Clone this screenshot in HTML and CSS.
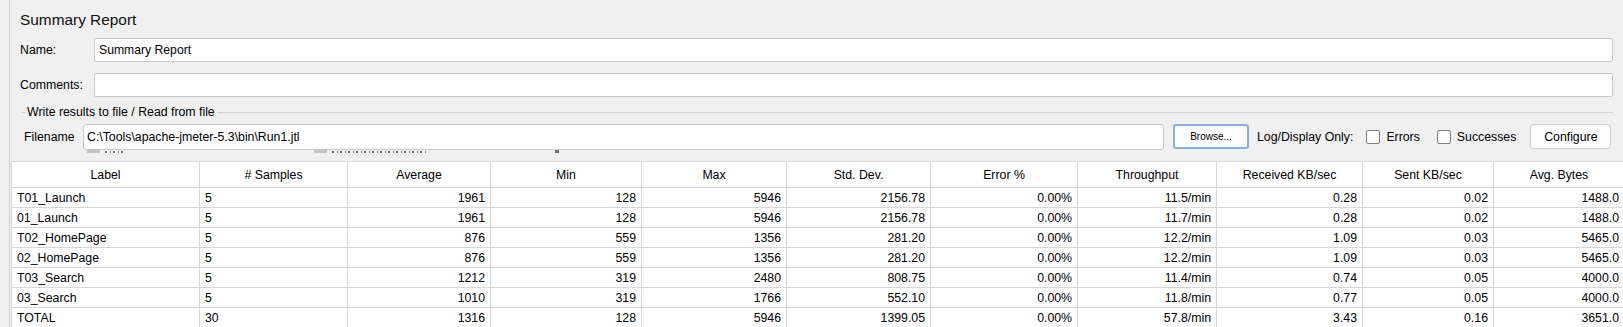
FILE: index.html
```html
<!DOCTYPE html>
<html>
<head>
<meta charset="utf-8">
<link rel="stylesheet" href="styles.css">
</head>
<body>
<div class="panel">
  <div class="title">Summary Report</div>
  <div class="form-row name-row">
    <div class="lbl">Name:</div>
    <div class="field">Summary Report</div>
  </div>
  <div class="form-row comments-row">
    <div class="lbl">Comments:</div>
    <div class="field"></div>
  </div>
  <div class="group">
    <div class="legend"><span>Write results to file / Read from file</span></div>
    <div class="file-row">
      <div class="file-lbl">Filename</div>
      <div class="file-field">C:\Tools\apache-jmeter-5.3\bin\Run1.jtl</div>
      <div class="btn browse">Browse...</div>
      <div class="txt log">Log/Display Only:</div>
      <div class="chk chk-err"></div>
      <div class="txt">Errors</div>
      <div class="chk chk-suc"></div>
      <div class="txt">Successes</div>
      <div class="btn configure">Configure</div>
    </div>
  </div>
  <div class="ghost">
    <span class="ghost-box g1"></span><span class="ghost-ink w1"></span>
    <span class="ghost-box g2"></span><span class="ghost-ink w2"></span>
    <span class="ghost-mark"></span>
  </div>
  <table class="grid">
    <colgroup>
      <col class="c-label"><col class="c-samples"><col class="c-avg"><col class="c-min"><col class="c-max"><col class="c-std"><col class="c-err"><col class="c-thr"><col class="c-recv"><col class="c-sent"><col class="c-bytes">
    </colgroup>
    <thead>
      <tr><th>Label</th><th># Samples</th><th>Average</th><th>Min</th><th>Max</th><th>Std. Dev.</th><th>Error %</th><th>Throughput</th><th>Received KB/sec</th><th>Sent KB/sec</th><th>Avg. Bytes</th></tr>
    </thead>
    <tbody>
      <tr><td class="l">T01_Launch</td><td class="l">5</td><td>1961</td><td>128</td><td>5946</td><td>2156.78</td><td>0.00%</td><td>11.5/min</td><td>0.28</td><td>0.02</td><td>1488.0</td></tr>
      <tr><td class="l">01_Launch</td><td class="l">5</td><td>1961</td><td>128</td><td>5946</td><td>2156.78</td><td>0.00%</td><td>11.7/min</td><td>0.28</td><td>0.02</td><td>1488.0</td></tr>
      <tr><td class="l">T02_HomePage</td><td class="l">5</td><td>876</td><td>559</td><td>1356</td><td>281.20</td><td>0.00%</td><td>12.2/min</td><td>1.09</td><td>0.03</td><td>5465.0</td></tr>
      <tr><td class="l">02_HomePage</td><td class="l">5</td><td>876</td><td>559</td><td>1356</td><td>281.20</td><td>0.00%</td><td>12.2/min</td><td>1.09</td><td>0.03</td><td>5465.0</td></tr>
      <tr><td class="l">T03_Search</td><td class="l">5</td><td>1212</td><td>319</td><td>2480</td><td>808.75</td><td>0.00%</td><td>11.4/min</td><td>0.74</td><td>0.05</td><td>4000.0</td></tr>
      <tr><td class="l">03_Search</td><td class="l">5</td><td>1010</td><td>319</td><td>1766</td><td>552.10</td><td>0.00%</td><td>11.8/min</td><td>0.77</td><td>0.05</td><td>4000.0</td></tr>
      <tr><td class="l">TOTAL</td><td class="l">30</td><td>1316</td><td>128</td><td>5946</td><td>1399.05</td><td>0.00%</td><td>57.8/min</td><td>3.43</td><td>0.16</td><td>3651.0</td></tr>
    </tbody>
  </table>
</div>
</body>
</html>
```
FILE: styles.css
```css
* { box-sizing: border-box; }
html, body {
  margin: 0;
  width: 1623px;
  height: 327px;
  overflow: hidden;
  background: #f0f0f0;
}
body {
  font-family: "Liberation Sans", Arial, sans-serif;
  font-size: 12.3px;
  color: #000;
}
.panel {
  margin-left: 9px;
  border-left: 1px solid #cfcfcf;
  height: 327px;
  padding: 11px 10px 0 10px;
}
.title {
  font-size: 15.4px;
  line-height: 18px;
  height: 18px;
  color: #111;
}
.form-row {
  display: flex;
  align-items: center;
  height: 24px;
}
.name-row { margin-top: 9px; }
.comments-row { margin-top: 11px; }
.lbl {
  width: 74px;
  flex: none;
}
.field {
  flex: 1;
  height: 24px;
  background: #fff;
  border: 1px solid #c9c9c9;
  border-radius: 2px;
  padding-left: 4px;
  display: flex;
  align-items: center;
  font-size: 12.2px;
}
.group {
  margin-top: 7px;
  margin-left: 2px;
}
.legend {
  display: flex;
  align-items: center;
  height: 16px;
}
.legend::before {
  content: "";
  width: 4px;
  border-top: 1px solid #d3d3d3;
}
.legend span { padding: 0 2px 0 1px; }
.legend::after {
  content: "";
  flex: 1;
  border-top: 1px solid #d3d3d3;
}
.file-row {
  display: flex;
  align-items: center;
  height: 26px;
  margin-top: 4px;
  padding-left: 2px;
}
.file-lbl { width: 59px; flex: none; }
.file-field {
  width: 1081px;
  flex: none;
  height: 26px;
  background: #fff;
  border: 1px solid #c9c9c9;
  border-radius: 3px;
  padding-left: 3px;
  display: flex;
  align-items: center;
}
.btn {
  flex: none;
  height: 25px;
  background: #fdfdfd;
  border: 1px solid #cfcfcf;
  border-radius: 3px;
  display: flex;
  align-items: center;
  justify-content: center;
  align-self: flex-start;
}
.browse {
  width: 76px;
  margin-left: 9px;
  border: 2px solid #86aedc;
  font-size: 10px;
}
.txt { flex: none; }
.log { margin-left: 8px; }
.chk {
  flex: none;
  width: 14px;
  height: 14px;
  background: #fff;
  border: 1px solid #7e7e7e;
  border-radius: 2px;
  margin-right: 6px;
}
.chk-err { margin-left: 13px; }
.chk-suc { margin-left: 17px; }
.configure {
  width: 81px;
  margin-left: 14px;
}
.ghost {
  height: 4px;
  display: flex;
  align-items: flex-start;
}
.ghost-box {
  flex: none;
  width: 13px;
  height: 3px;
  background: #c4c4c4;
  margin-right: 5px;
}
.g1 { margin-left: 67px; }
.g2 { margin-left: 189px; }
.ghost-ink {
  flex: none;
  height: 2px;
  margin-top: 1px;
  background: repeating-linear-gradient(90deg, #6a6a6a 0 2px, transparent 2px 5px, #8a8a8a 5px 6px, transparent 6px 8px);
}
.w1 { width: 20px; }
.w2 { width: 94px; }
.ghost-mark {
  flex: none;
  width: 4px;
  height: 3px;
  background: #707070;
  margin-left: 129px;
}
.grid {
  margin-top: 7px;
  margin-left: -9px;
  width: 1613px;
  border-collapse: collapse;
  table-layout: fixed;
  background: #fff;
}
.c-label { width: 188px; }
.c-samples { width: 148px; }
.c-avg { width: 143px; }
.c-min { width: 151px; }
.c-max { width: 145px; }
.c-std { width: 144px; }
.c-err { width: 147px; }
.c-thr { width: 139px; }
.c-recv { width: 146px; }
.c-sent { width: 131px; }
.c-bytes { width: 131px; }
.grid th, .grid td {
  border: 1px solid #d7d7d7;
  padding: 0 5px;
  white-space: nowrap;
  overflow: hidden;
  font-weight: normal;
}
.grid th {
  height: 26px;
  text-align: center;
}
.grid td {
  height: 20px;
  text-align: right;
}
.grid td.l { text-align: left; }
```
